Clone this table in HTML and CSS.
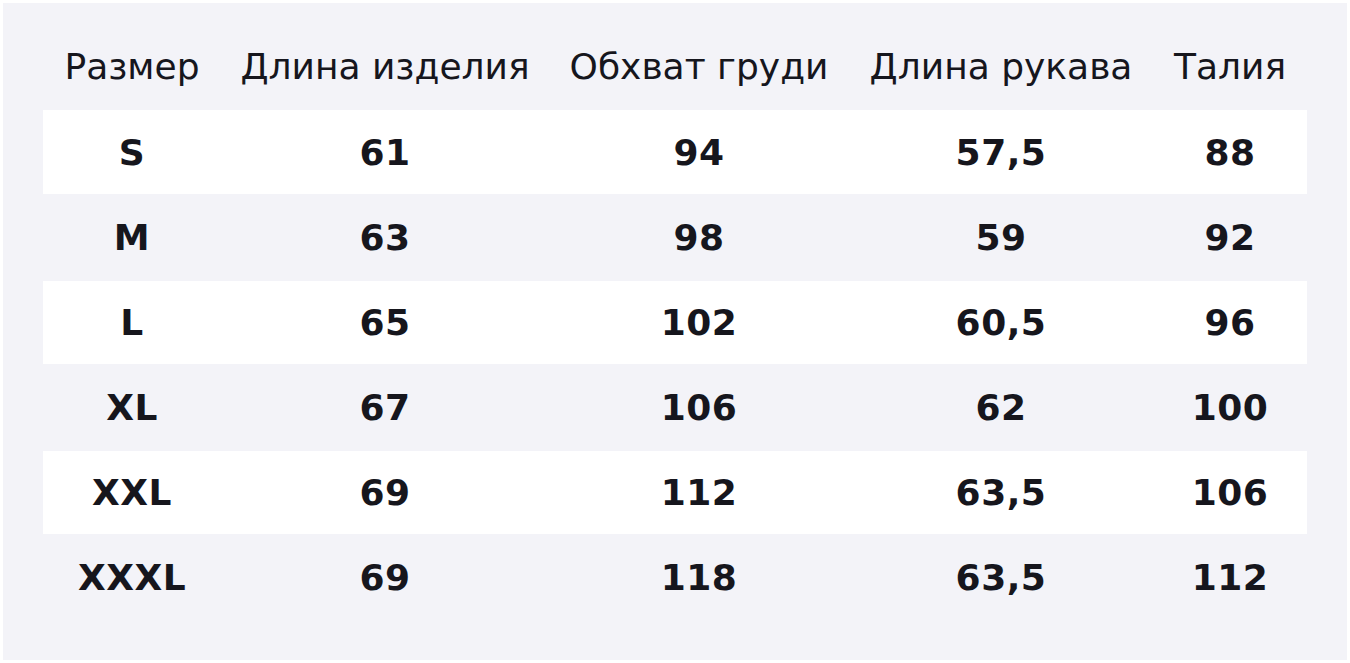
FILE: index.html
```html
<!DOCTYPE html>
<html lang="ru">
<head>
<meta charset="utf-8">
<link rel="stylesheet" href="styles.css">
</head>
<body>
<div class="panel">
  <table class="sizes">
    <colgroup>
      <col class="c1"><col class="c2"><col class="c3"><col class="c4"><col class="c5">
    </colgroup>
    <thead>
      <tr><th>Размер</th><th>Длина изделия</th><th>Обхват груди</th><th>Длина рукава</th><th>Талия</th></tr>
    </thead>
    <tbody>
      <tr><td>S</td><td>61</td><td>94</td><td>57,5</td><td>88</td></tr>
      <tr><td>M</td><td>63</td><td>98</td><td>59</td><td>92</td></tr>
      <tr><td>L</td><td>65</td><td>102</td><td>60,5</td><td>96</td></tr>
      <tr><td>XL</td><td>67</td><td>106</td><td>62</td><td>100</td></tr>
      <tr><td>XXL</td><td>69</td><td>112</td><td>63,5</td><td>106</td></tr>
      <tr><td>XXXL</td><td>69</td><td>118</td><td>63,5</td><td>112</td></tr>
    </tbody>
  </table>
</div>
</body>
</html>
```
FILE: styles.css
```css
html, body {
  margin: 0;
  padding: 0;
  background: #ffffff;
}
body {
  padding: 3px;
  font-family: "DejaVu Sans", sans-serif;
  color: #16161d;
}
.panel {
  width: 1344px;
  height: 657px;
  box-sizing: border-box;
  background: #f3f3f8;
  padding: 40px;
}
.sizes {
  border-collapse: collapse;
  width: 1264px;
  table-layout: fixed;
}
.c1 { width: 178px; }
.c2 { width: 328px; }
.c3 { width: 300px; }
.c4 { width: 304px; }
.c5 { width: 154px; }
.sizes th {
  font-weight: normal;
  font-size: 36px;
  height: 47px;
  padding: 0 0 20px;
  text-align: center;
  vertical-align: middle;
}
.sizes td {
  font-weight: bold;
  font-size: 36px;
  letter-spacing: 0.5px;
  height: 85px;
  padding: 0;
  text-align: center;
  vertical-align: middle;
  box-sizing: border-box;
  border-bottom: 2px solid #f3f3f8;
}
.sizes tbody tr:nth-child(odd) td {
  background: #ffffff;
}
```
